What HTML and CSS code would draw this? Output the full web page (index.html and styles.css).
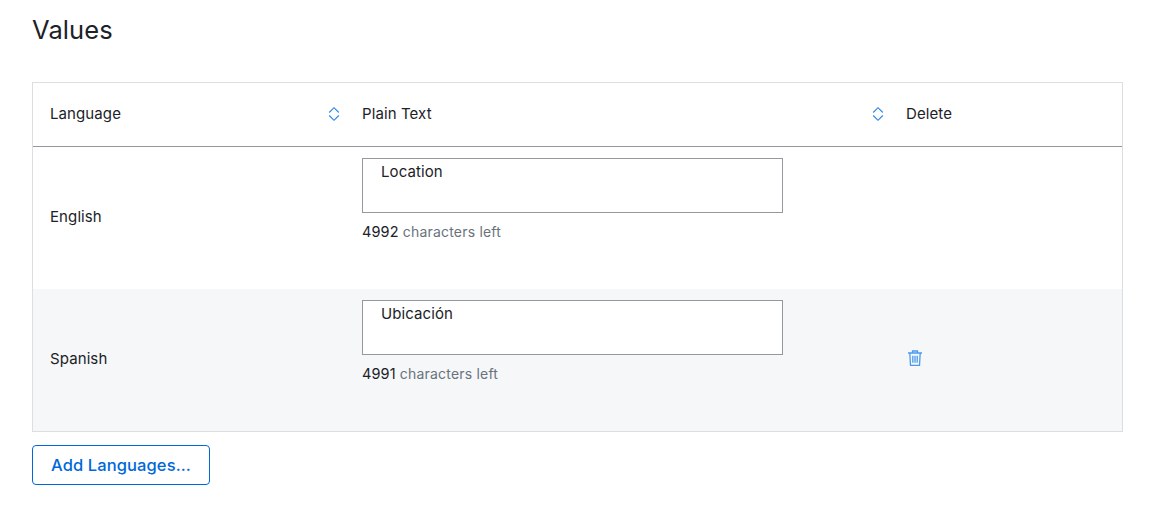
FILE: index.html
```html
<!DOCTYPE html>
<html lang="en">
<head>
<meta charset="utf-8">
<title>Values</title>
<link rel="stylesheet" href="styles.css">
</head>
<body>
<h2 class="title">Values</h2>
<div class="table">
  <div class="row head">
    <div class="cell lang"><span>Language</span>
      <svg class="sort" viewBox="0 0 14 16" width="14" height="16"><path d="M2.200 6.500 7 1.700l4.800 4.800M2.200 9.500 7 14.300l4.800-4.800" fill="none" stroke="#2b85e8" stroke-width="1.100"/></svg>
    </div>
    <div class="cell text"><span>Plain Text</span>
      <svg class="sort" viewBox="0 0 14 16" width="14" height="16"><path d="M2.200 6.500 7 1.700l4.800 4.800M2.200 9.500 7 14.300l4.800-4.800" fill="none" stroke="#2b85e8" stroke-width="1.100"/></svg>
    </div>
    <div class="cell del">Delete</div>
  </div>
  <div class="row body">
    <div class="cell lang">English</div>
    <div class="cell text stack">
      <div class="input">Location</div>
      <div class="count"><b>4992</b> characters left</div>
    </div>
    <div class="cell del"></div>
  </div>
  <div class="row body alt">
    <div class="cell lang">Spanish</div>
    <div class="cell text stack">
      <div class="input">Ubicación</div>
      <div class="count"><b>4991</b> characters left</div>
    </div>
    <div class="cell del">
      <svg class="trash" viewBox="0 0 16 18" width="16" height="18" fill="none" stroke="#4a9bf0" stroke-width="1.300"><path d="M1 4h14M5.500 4V2h5v2M2.800 4l.7 12.400h9L13.200 4M5.800 6.800v7M8 6.800v7M10.200 6.800v7"/></svg>
    </div>
  </div>
</div>
<button class="add" type="button">Add Languages...</button>
</body>
</html>
```
FILE: styles.css
```css
* { box-sizing: border-box; }
html, body { margin: 0; background: #fff; }
body {
  padding: 15px 32px 0;
  font-family: Inter, "Noto Sans", sans-serif;
  font-size: 15px;
  letter-spacing: 0.1px;
  color: #1c2228;
  height: 513px;
  overflow: hidden;
}
.title {
  margin: 0 0 37px;
  font-size: 25.5px;
  line-height: 30px;
  font-weight: 400;
}
.table {
  width: 1091px;
  border: 1px solid #dcdfe2;
}
.row {
  display: grid;
  grid-template-columns: 312px 544px 1fr;
}
.head {
  height: 64px;
  padding-bottom: 2px;
  border-bottom: 1px solid #94999e;
  align-items: center;
}
.body {
  height: 142px;
  padding-bottom: 4px;
  align-items: center;
}
.alt { background: #f6f7f9; }
.cell { padding-left: 17px; }
.head .cell {
  display: flex;
  justify-content: space-between;
  align-items: center;
  padding-right: 4px;
}
.stack { align-self: start; padding-top: 11px; }
.input {
  width: 421px;
  height: 55px;
  border: 1px solid #94999e;
  background: #fff;
  padding: 4px 18px;
  line-height: 18px;
}
.count {
  margin-top: 10px;
  font-size: 14px;
  line-height: 18px;
  letter-spacing: 0.2px;
  color: #69737c;
}
.count b { font-weight: 400; font-size: 14.500px; letter-spacing: 0.1px; color: #1c2228; }
.del { display: flex; align-items: center; }
.trash { margin-left: 1px; display: block; }
.sort { display: block; }
.add {
  display: block;
  margin-top: 13px;
  width: 178px;
  height: 40px;
  border: 1px solid #0068d9;
  border-radius: 4px;
  background: #fff;
  color: #0068d9;
  font: 500 16.500px Inter, "Noto Sans", sans-serif;
  letter-spacing: 0.1px;
  padding: 0;
}
```
